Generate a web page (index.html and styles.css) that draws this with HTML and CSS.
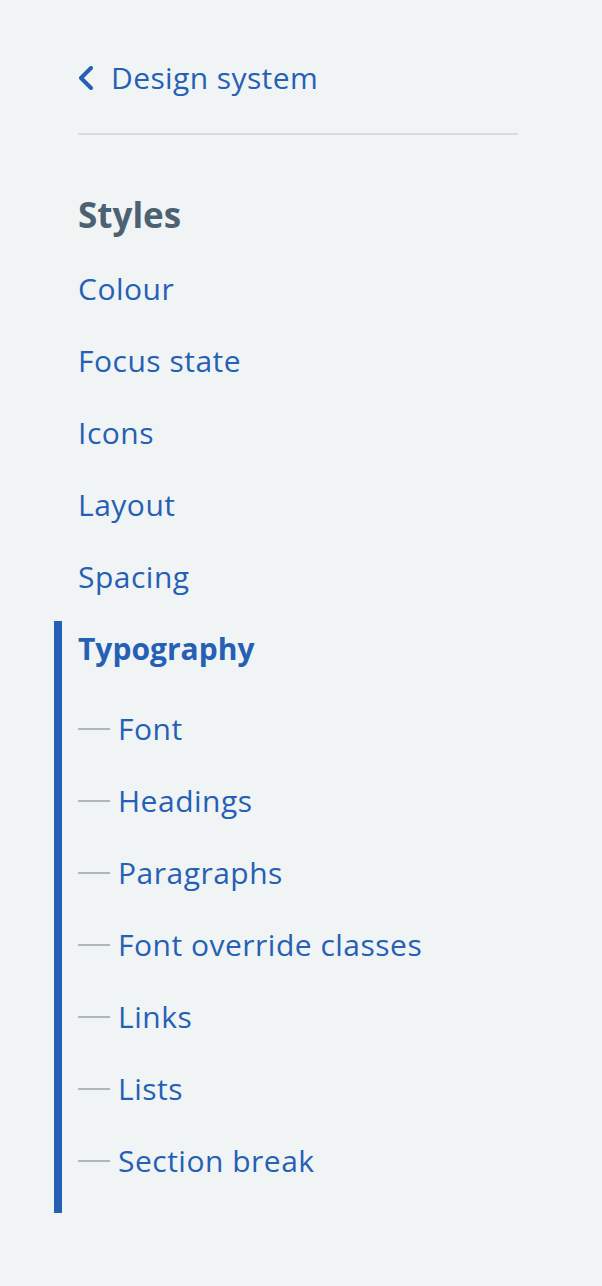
FILE: index.html
```html
<!DOCTYPE html>
<html>
	<head>
		<meta charset="UTF-8">
		<link rel="stylesheet" href="styles.css">
	</head>
	<body>
		<nav class="side-nav">
			<a class="back-link" href="#">
				<svg class="chevron" width="16" height="24" viewBox="0 0 16 24"><polyline points="13,2 3,12 13,22" fill="none" stroke="currentColor" stroke-width="4" stroke-linecap="round" stroke-linejoin="round"/></svg>
				Design system
			</a>
			<hr class="rule">
			<h2 class="side-title">Styles</h2>
			<ul class="nav-list">
				<li><a href="#">Colour</a></li>
				<li><a href="#">Focus state</a></li>
				<li><a href="#">Icons</a></li>
				<li><a href="#">Layout</a></li>
				<li><a href="#">Spacing</a></li>
				<li class="current">
					<a class="current-link" href="#">Typography</a>
					<ul class="sub-list">
						<li><a href="#">Font</a></li>
						<li><a href="#">Headings</a></li>
						<li><a href="#">Paragraphs</a></li>
						<li><a href="#">Font override classes</a></li>
						<li><a href="#">Links</a></li>
						<li><a href="#">Lists</a></li>
						<li><a href="#">Section break</a></li>
					</ul>
				</li>
			</ul>
		</nav>
	</body>
</html>
```

FILE: styles.css
```css
* {
	font-family: "Open Sans", "Noto Sans", sans-serif;
}
html, body {
	margin: 0;
	padding: 0;
}
body {
	background: #f0f4f5;
	min-height: 1286px;
}

.side-nav {
	padding: 60px 0 0 78px;
	width: 440px;
}
a {
	color: #2660b4;
	text-decoration: none;
}
.back-link {
	align-items: center;
	display: flex;
	font-size: 30px;
	gap: 17px;
	letter-spacing: 0.4px;
	line-height: 36px;
}
.chevron {
	flex: none;
}
.rule {
	border: 0;
	border-top: 2px solid #d8dde0;
	margin: 37px 0 0 0;
}
.side-title {
	color: #4c6272;
	font-size: 35px;
	font-weight: bold;
	line-height: 36px;
	margin: 62px 0 38px 0;
}

.nav-list, .sub-list {
	list-style: none;
	margin: 0;
	padding: 0;
}
.nav-list > li {
	margin-bottom: 36px;
}
.nav-list a {
	display: block;
	font-size: 30px;
	letter-spacing: 0.5px;
	line-height: 36px;
}
.nav-list > .current {
	border-left: 8px solid #2660b4;
	margin: -10px 0 0 -24px;
	padding: 10px 0 34px 16px;
}
.nav-list .current-link {
	font-weight: bold;
	letter-spacing: 0;
}
.sub-list {
	margin-top: 44px;
}
.sub-list li {
	align-items: center;
	display: flex;
	gap: 8px;
}
.sub-list li + li {
	margin-top: 36px;
}
.sub-list li::before {
	border-top: 2px solid #aeb7bd;
	content: "";
	flex: none;
	width: 32px;
}
```
